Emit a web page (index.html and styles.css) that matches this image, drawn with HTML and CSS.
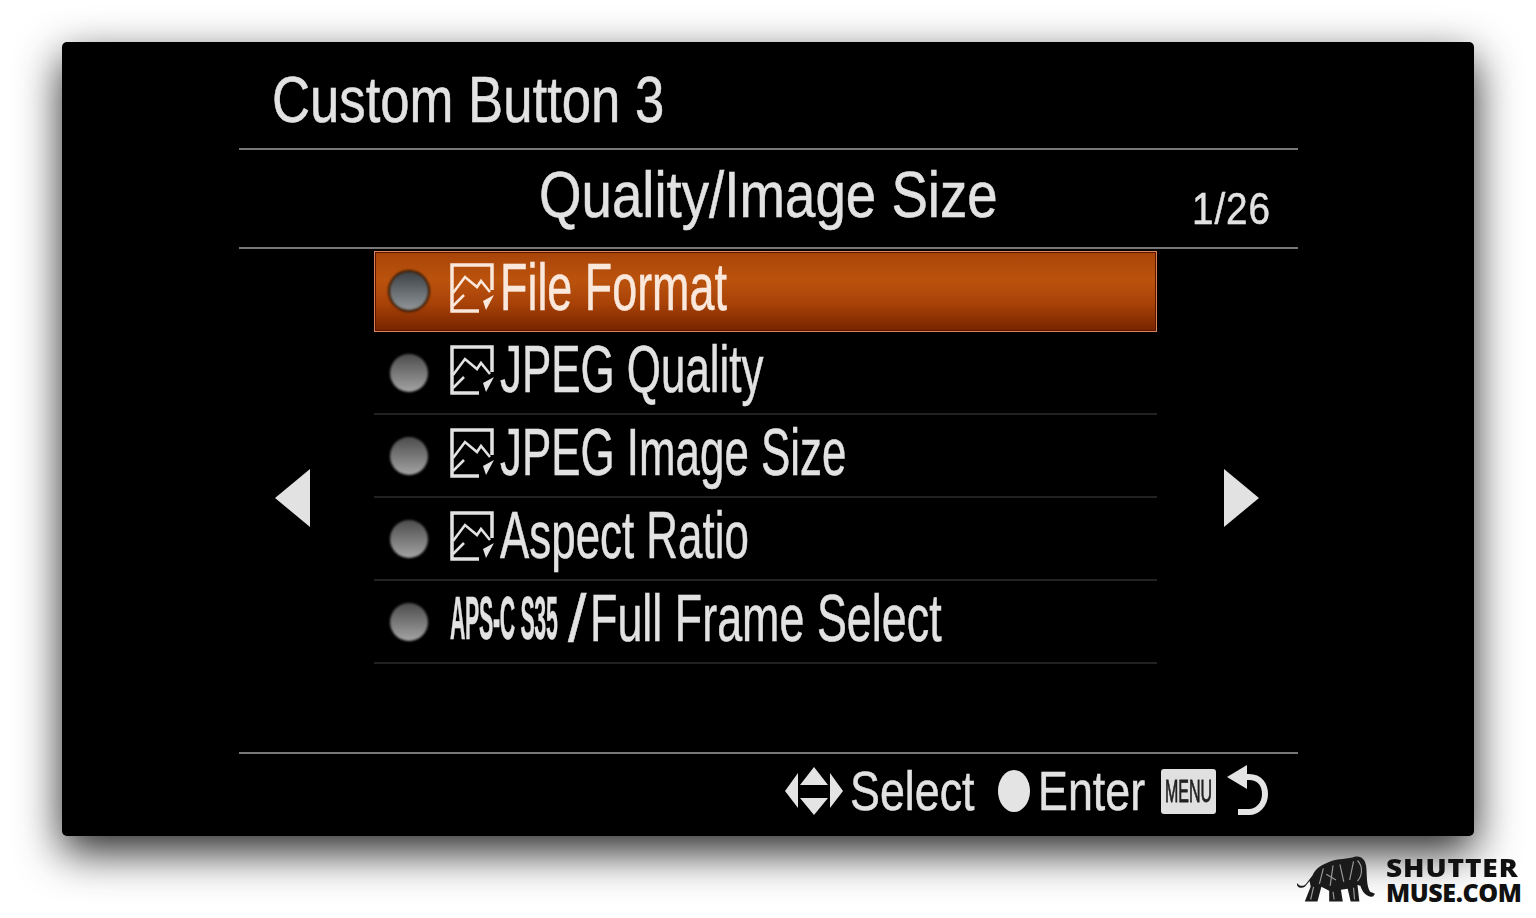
FILE: index.html
```html
<!DOCTYPE html>
<html lang="en">
<head>
  <meta charset="UTF-8" />
  <title>Custom Button 3</title>
  <link rel="stylesheet" href="styles.css">
</head>
<body>
  <svg class="defs" width="0" height="0">
    <symbol id="still" viewBox="0 0 44 50">
      <path d="M29 48H2V2H42V27" fill="none" stroke="currentColor" stroke-width="3.5"/>
      <path d="M3 30L15 14L27 24L31 18L40 29M3 43L14 32" fill="none" stroke="currentColor" stroke-width="2.6"/>
      <path d="M33 38L44 32L36 47Z" fill="currentColor"/>
    </symbol>
  </svg>

  <div class="screen">
    <div class="panel">
      <div class="title-row"><h1>Custom Button 3</h1></div>
      <div class="sub-row">
        <h2>Quality/Image Size</h2>
        <span class="page-no">1/26</span>
      </div>

      <div class="body-row">
        <div class="side side-left"><span class="arrow-left"></span></div>
        <ul class="menu">
          <li class="item selected">
            <span class="dot"></span>
            <svg class="still"><use href="#still"/></svg>
            <span class="label">File Format</span>
          </li>
          <li class="item">
            <span class="dot"></span>
            <svg class="still"><use href="#still"/></svg>
            <span class="label">JPEG Quality</span>
          </li>
          <li class="item">
            <span class="dot"></span>
            <svg class="still"><use href="#still"/></svg>
            <span class="label">JPEG Image Size</span>
          </li>
          <li class="item">
            <span class="dot"></span>
            <svg class="still"><use href="#still"/></svg>
            <span class="label">Aspect Ratio</span>
          </li>
          <li class="item">
            <span class="dot"></span>
            <span class="aps">APS-C S35</span>
            <span class="slash">/</span>
            <span class="label label-full">Full Frame Select</span>
          </li>
        </ul>
        <div class="side side-right"><span class="arrow-right"></span></div>
      </div>

      <div class="foot-row">
        <svg class="dpad" viewBox="0 0 58 48">
          <path d="M29 0L43 18H15ZM29 48L43 31H15ZM0 24L13 6V41ZM58 24L45 6V41Z" fill="#e4e4e4"/>
        </svg>
        <span class="foot-text select-text">Select</span>
        <span class="enter-dot"></span>
        <span class="foot-text enter-text">Enter</span>
        <span class="menu-key"><span class="menu-word">MENU</span></span>
        <svg class="back" viewBox="0 0 42 52">
          <path d="M0 12L20 0V24Z" fill="#e4e4e4"/>
          <path d="M17 12H22C33 12 38 20 38 29C38 40 30 47 22 47H11" fill="none" stroke="#e4e4e4" stroke-width="6"/>
        </svg>
      </div>
    </div>
  </div>

  <div class="brand">
    <svg class="elephant" viewBox="0 0 80 48">
      <path d="M0 27C3 31 7 31 10 27L16 19C19 12 26 8 34 5C42 2 52 3 60 0C66 -1 70 3 71 10C72 20 71 30 75 36L80 38L78 41C72 42 67 37 65 30L62 29L64 46H55L52 33L45 34L47 46H33L33 35L25 31L21 46H8L14 31L13 25L8 31C5 33 1 32 0 29Z" fill="#1a1a1a"/>
      <path d="M27 12L23 28M37 9L34 30M44 8L48 26M58 5L54 24M62 4C68 10 67 20 62 25M30 18L40 24M17 31L14 44M37 36L38 44M58 32L59 44" stroke="#9a9a9a" stroke-width="1.2" fill="none"/>
    </svg>
    <div class="brand-name">
      <span class="brand-top">SHUTTER</span>
      <span class="brand-bottom">MUSE.COM</span>
    </div>
  </div>
</body>
</html>
```

FILE: styles.css
```css
* {
  margin: 0;
  padding: 0;
  box-sizing: border-box;
}

html, body {
  width: 1536px;
  height: 918px;
  overflow: hidden;
  background: #fff;
}

body {
  padding: 42px 62px;
  font-family: "Liberation Sans", Arial, sans-serif;
  color: #e2e2e2;
}

.defs {
  position: absolute;
}

.screen {
  width: 1412px;
  height: 794px;
  background: #000;
  border-radius: 5px;
  box-shadow: 0 16px 44px rgba(0, 0, 0, 0.85);
  padding-left: 177px;
}

.panel {
  width: 1059px;
  display: flex;
  flex-direction: column;
  filter: blur(0.5px);
  -webkit-text-stroke: 0.5px currentColor;
}

.title-row {
  height: 108px;
  border-bottom: 2px solid #777;
  padding: 20px 0 0 33px;
}

h1 {
  font-size: 64px;
  line-height: 76px;
  font-weight: normal;
  white-space: nowrap;
  transform: scaleX(0.823);
  transform-origin: left;
}

.sub-row {
  height: 99px;
  border-bottom: 2px solid #777;
  display: flex;
  padding: 7px 29px 0 300px;
  justify-content: space-between;
}

h2 {
  width: 457px;
  flex: none;
  font-size: 64px;
  line-height: 76px;
  font-weight: normal;
  white-space: nowrap;
  transform: scaleX(0.854);
  transform-origin: left;
}

.page-no {
  width: 77px;
  flex: none;
  font-size: 44px;
  line-height: 50px;
  padding-top: 27px;
  letter-spacing: 1px;
  white-space: nowrap;
  transform: scaleX(0.88);
  transform-origin: left;
}

.body-row {
  height: 503px;
  display: flex;
  align-items: stretch;
}

.side {
  width: 135px;
  flex: none;
  display: flex;
  align-items: center;
  padding-left: 36px;
  padding-bottom: 5px;
}

.side-right {
  width: 141px;
  padding-left: 67px;
}

.arrow-left {
  border-style: solid;
  border-width: 29px 35px 29px 0;
  border-color: transparent #e2e2e2 transparent transparent;
}

.arrow-right {
  border-style: solid;
  border-width: 29px 0 29px 35px;
  border-color: transparent transparent transparent #e2e2e2;
}

.menu {
  width: 783px;
  flex: none;
  list-style: none;
  padding-top: 2px;
}

.item {
  height: 83px;
  display: flex;
  align-items: center;
  padding-left: 16px;
  border-bottom: 2px solid #222;
}

.selected {
  height: 81px;
  padding-left: 15px;
  padding-bottom: 2px;
  border: 1px solid #d9875a;
  outline: 1px solid #5a1400;
  outline-offset: -2px;
  background: linear-gradient(#a84408, #bb530e 35%, #a84207 65%, #772400);
  color: #fbe8dc;
}

.dot {
  width: 38px;
  height: 38px;
  flex: none;
  border-radius: 50%;
  background: linear-gradient(#4c4c4c, #a4a4a4);
  filter: blur(1px);
}

.selected .dot {
  background: linear-gradient(#3c4246, #8f9598);
  box-shadow: 0 0 0 2px #2c1608;
}

.still {
  width: 44px;
  height: 50px;
  flex: none;
  margin-left: 22px;
  margin-top: -5px;
  color: #e2e2e2;
  -webkit-text-stroke: 0;
}

.selected .still {
  color: #fbe8dc;
}

.label {
  font-size: 66px;
  line-height: 70px;
  margin-left: 6px;
  margin-top: -7px;
  white-space: nowrap;
  flex: none;
  width: 400px;
  transform: scaleX(0.665);
  transform-origin: left;
}

.selected .label {
  transform: scaleX(0.68);
}

.aps {
  font-size: 62px;
  line-height: 70px;
  font-weight: bold;
  width: 108px;
  flex: none;
  margin-left: 22px;
  margin-top: -7px;
  letter-spacing: -1px;
  white-space: nowrap;
  transform: scaleX(0.345);
  transform-origin: left;
}

.slash {
  width: 19px;
  flex: none;
  margin-left: 10px;
  margin-top: -7px;
  font-size: 66px;
  line-height: 70px;
}

.label-full {
  margin-left: 3px;
  transform: scaleX(0.68);
}

.foot-row {
  border-top: 2px solid #777;
  height: 82px;
  display: flex;
  align-items: center;
  padding-left: 546px;
  padding-bottom: 6px;
}

.dpad {
  width: 58px;
  height: 48px;
  flex: none;
}

.foot-text {
  font-size: 56px;
  line-height: 70px;
  flex: none;
  white-space: nowrap;
  transform: scaleX(0.8);
  transform-origin: left;
}

.select-text {
  width: 125px;
  margin-left: 7px;
}

.enter-text {
  width: 103px;
  margin-left: 5px;
}

.enter-dot {
  width: 32px;
  height: 42px;
  flex: none;
  border-radius: 50%;
  background: #e4e4e4;
  margin-left: 23px;
  margin-right: 3px;
}

.menu-key {
  width: 55px;
  height: 45px;
  flex: none;
  margin-left: 20px;
  padding-left: 4px;
  background: #e0e0e0;
  color: #222;
  border-radius: 3px;
  font-size: 32px;
  line-height: 45px;
  white-space: nowrap;
  -webkit-text-stroke: 0.8px #222;
}

.menu-word {
  display: inline-block;
  transform: scaleX(0.5);
  transform-origin: left;
}

.back {
  width: 42px;
  height: 52px;
  flex: none;
  margin-left: 11px;
}

.brand {
  position: absolute;
  left: 1297px;
  top: 855px;
  display: flex;
  gap: 11px;
  align-items: center;
}

.elephant {
  width: 78px;
  height: 48px;
}

.brand-name {
  font-family: "Open Sans", "Liberation Sans", sans-serif;
  font-weight: 800;
  font-size: 25px;
  line-height: 25px;
  color: #111;
}

.brand-top {
  display: block;
  letter-spacing: 0.8px;
  transform: scaleX(1.12);
  transform-origin: left;
}

.brand-bottom {
  display: block;
  letter-spacing: -0.4px;
}
```
